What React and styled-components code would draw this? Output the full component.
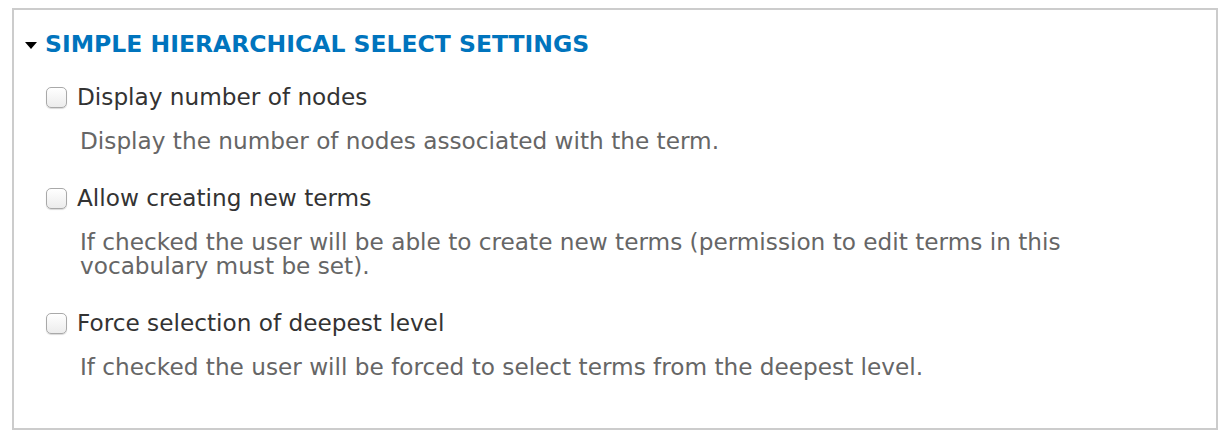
import React from 'react';
import styled, { createGlobalStyle } from 'styled-components';

const GlobalStyle = createGlobalStyle`
  html, body {
    margin: 0;
    padding: 0;
    background: #fff;
  }
  body {
    font-family: "DejaVu Sans", "Liberation Sans", sans-serif;
    color: #333;
  }
`;

const Fieldset = styled.section`
  box-sizing: border-box;
  width: 1206px;
  height: 422px;
  margin: 8px 0 0 12px;
  border: 2px solid #ccc;
  padding: 20px 0 0 11px;
`;

const Legend = styled.div`
  display: flex;
  align-items: center;
  gap: 8px;
  height: 28px;
  line-height: 28px;
  font-size: 23.5px;
  font-weight: bold;
  color: #0074bd;
`;

const Arrow = styled.span`
  width: 0;
  height: 0;
  border-left: 6px solid transparent;
  border-right: 6px solid transparent;
  border-top: 7px solid #000;
  margin-top: 3px;
`;

const Items = styled.div`
  display: flex;
  flex-direction: column;
  gap: 33px;
  padding: 27px 0 0 21px;
`;

const Item = styled.div`
  display: flex;
  flex-direction: column;
`;

const Label = styled.label`
  display: flex;
  align-items: center;
  gap: 10px;
  height: 24px;
  line-height: 24px;
  font-size: 23.2px;
  color: #333;
`;

const Box = styled.span`
  box-sizing: border-box;
  flex: none;
  width: 21px;
  height: 21px;
  border: 1px solid #a9a9a9;
  border-radius: 5px;
  background: linear-gradient(#fff, #ececec);
  box-shadow: 0 1px 1px rgba(0, 0, 0, 0.15);
`;

const Description = styled.div`
  margin: 20px 0 0 34px;
  font-size: 23.2px;
  line-height: 24px;
  color: #666;
  max-width: 1040px;
`;

const options = [
  {
    label: 'Display number of nodes',
    desc: 'Display the number of nodes associated with the term.',
  },
  {
    label: 'Allow creating new terms',
    desc: 'If checked the user will be able to create new terms (permission to edit terms in this vocabulary must be set).',
  },
  {
    label: 'Force selection of deepest level',
    desc: 'If checked the user will be forced to select terms from the deepest level.',
  },
];

const App = () => (
  <>
    <GlobalStyle />
    <Fieldset>
      <Legend>
        <Arrow />
        SIMPLE HIERARCHICAL SELECT SETTINGS
      </Legend>
      <Items>
        {options.map((o) => (
          <Item key={o.label}>
            <Label>
              <Box />
              {o.label}
            </Label>
            <Description>{o.desc}</Description>
          </Item>
        ))}
      </Items>
    </Fieldset>
  </>
);

export default App;
